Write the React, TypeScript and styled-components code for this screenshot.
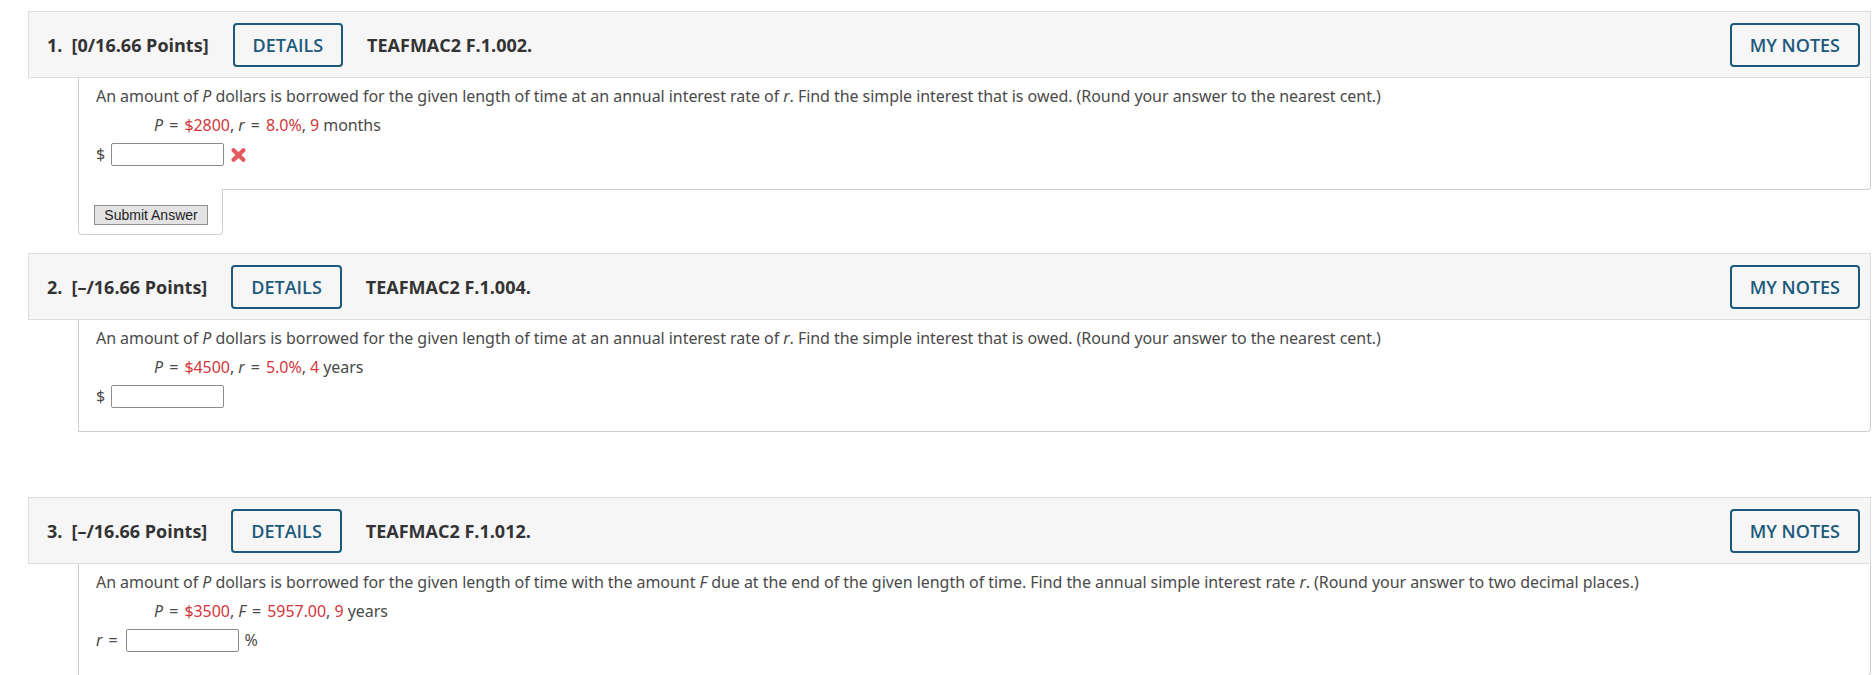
import React from "react";
import styled, { createGlobalStyle } from "styled-components";

const GlobalStyle = createGlobalStyle`
  html, body { margin: 0; padding: 0; background: #ffffff; }
  body { font-family: "Noto Sans", "Open Sans", sans-serif; }
`;

const Page = styled.main`
  display: flex;
  flex-direction: column;
  padding: 11px 5px 0 28px;
`;

const QuestionBlock = styled.section`
  display: flex;
  flex-direction: column;
  margin-bottom: 18px;
`;

const Header = styled.header`
  box-sizing: border-box;
  height: 67px;
  display: flex;
  align-items: center;
  gap: 24px;
  padding: 0 10px 0 18px;
  background: #f6f6f6;
  border: 1px solid #dddddd;
  font-family: "Open Sans", "Noto Sans", sans-serif;
  font-size: 18px;
  color: #333333;
`;

const Points = styled.span`
  font-weight: 700;
  white-space: nowrap;
`;

const Num = styled.span`
  margin-right: 9px;
`;

const Title = styled.span`
  flex: 1;
  font-weight: 700;
  white-space: nowrap;
`;

const OutlineButton = styled.button`
  box-sizing: border-box;
  height: 44px;
  padding: 0 18px;
  border: 2px solid #1c5a7c;
  border-radius: 4px;
  background: transparent;
  color: #1c5a7c;
  font-family: "Open Sans", "Noto Sans", sans-serif;
  font-size: 18px;
  font-weight: 600;
  cursor: pointer;
`;

const Body = styled.div`
  margin-left: 50px;
  padding: 4px 17px 23px 17px;
  border: 1px solid #cfcfcf;
  border-top: none;
  border-radius: 0 0 4px 0;
  font-family: "Noto Sans", "Open Sans", sans-serif;
  font-size: 16px;
  letter-spacing: -0.05px;
  color: #4a4a4a;
`;

const Prompt = styled.p`
  margin: 0;
  line-height: 28px;
  white-space: nowrap;
`;

const Given = styled.p`
  margin: 1px 0 0 0;
  padding-left: 58px;
  line-height: 28px;
  white-space: nowrap;
`;

const Var = styled.i`
  font-style: italic;
`;

const Eq = styled.span`
  margin: 0 2px;
`;

const Val = styled.span`
  color: #d2363b;
`;

const AnswerRow = styled.div`
  margin-top: 4px;
  height: 23px;
  display: flex;
  align-items: center;
  gap: 6px;
  line-height: 23px;
`;

const AnswerInput = styled.input`
  box-sizing: border-box;
  width: 113px;
  height: 23px;
  margin: 0;
  padding: 0 4px;
  border: 1px solid #8c8c8c;
  border-radius: 2px;
  background: #ffffff;
  font-size: 14px;
`;

const WrongMark = styled.svg`
  margin-left: 1px;
  flex: none;
`;

const SubmitTab = styled.div<{ $empty?: boolean }>`
  box-sizing: border-box;
  width: 145px;
  height: ${(p) => (p.$empty ? "48px" : "46px")};
  margin: -1px 0 0 50px;
  padding: 14px 0 0 15px;
  background: ${(p) => (p.$empty ? "transparent" : "#ffffff")};
  border: ${(p) => (p.$empty ? "none" : "1px solid #cfcfcf")};
  border-top: none;
  border-radius: 0 0 4px 4px;
`;

const SubmitButton = styled.button`
  box-sizing: border-box;
  width: 114px;
  height: 20px;
  padding: 0;
  background: #e3e3e3;
  border: 1px solid #8f8f8f;
  border-radius: 0;
  color: #222222;
  font-family: "Liberation Sans", Arial, sans-serif;
  font-size: 14px;
  line-height: 18px;
  cursor: pointer;
`;

type Question = {
  num: number;
  points: string;
  code: string;
  prompt: React.ReactNode;
  given: React.ReactNode;
  answer: React.ReactNode;
  submit: boolean;
};

const RedX = () => (
  <WrongMark width="15" height="14" viewBox="0 0 15 14" aria-label="incorrect">
    <path
      d="M2.6 2.2 L12.4 11.8 M12.4 2.2 L2.6 11.8"
      stroke="#e35b60"
      strokeWidth="4.2"
      strokeLinecap="round"
      fill="none"
    />
  </WrongMark>
);

const interestPrompt = (
  <>
    An amount of <Var>P</Var> dollars is borrowed for the given length of time at an annual interest rate of{" "}
    <Var>r</Var>. Find the simple interest that is owed. (Round your answer to the nearest cent.)
  </>
);

const questions: Question[] = [
  {
    num: 1,
    points: "[0/16.66 Points]",
    code: "TEAFMAC2 F.1.002.",
    prompt: interestPrompt,
    given: (
      <>
        <Var>P</Var> <Eq>=</Eq> <Val>$2800</Val>, <Var>r</Var> <Eq>=</Eq> <Val>8.0%</Val>, <Val>9</Val> months
      </>
    ),
    answer: (
      <>
        <span>$</span>
        <AnswerInput type="text" />
        <RedX />
      </>
    ),
    submit: true,
  },
  {
    num: 2,
    points: "[\u2013/16.66 Points]",
    code: "TEAFMAC2 F.1.004.",
    prompt: interestPrompt,
    given: (
      <>
        <Var>P</Var> <Eq>=</Eq> <Val>$4500</Val>, <Var>r</Var> <Eq>=</Eq> <Val>5.0%</Val>, <Val>4</Val> years
      </>
    ),
    answer: (
      <>
        <span>$</span>
        <AnswerInput type="text" />
      </>
    ),
    submit: false,
  },
  {
    num: 3,
    points: "[\u2013/16.66 Points]",
    code: "TEAFMAC2 F.1.012.",
    prompt: (
      <>
        An amount of <Var>P</Var> dollars is borrowed for the given length of time with the amount <Var>F</Var> due
        at the end of the given length of time. Find the annual simple interest rate <Var>r</Var>. (Round your answer
        to two decimal places.)
      </>
    ),
    given: (
      <>
        <Var>P</Var> <Eq>=</Eq> <Val>$3500</Val>, <Var>F</Var> <Eq>=</Eq> <Val>5957.00</Val>, <Val>9</Val> years
      </>
    ),
    answer: (
      <>
        <span>
          <Var>r</Var> <Eq>=</Eq>
        </span>
        <AnswerInput type="text" />
        <span>%</span>
      </>
    ),
    submit: false,
  },
];

export default function App() {
  return (
    <>
      <GlobalStyle />
      <Page>
        {questions.map((q) => (
          <QuestionBlock key={q.num}>
            <Header>
              <Points>
                <Num>{q.num}.</Num>
                {q.points}
              </Points>
              <OutlineButton type="button">DETAILS</OutlineButton>
              <Title>{q.code}</Title>
              <OutlineButton type="button">MY NOTES</OutlineButton>
            </Header>
            <Body>
              <Prompt>{q.prompt}</Prompt>
              <Given>{q.given}</Given>
              <AnswerRow>{q.answer}</AnswerRow>
            </Body>
            <SubmitTab $empty={!q.submit}>
              {q.submit && <SubmitButton type="button">Submit Answer</SubmitButton>}
            </SubmitTab>
          </QuestionBlock>
        ))}
      </Page>
    </>
  );
}
